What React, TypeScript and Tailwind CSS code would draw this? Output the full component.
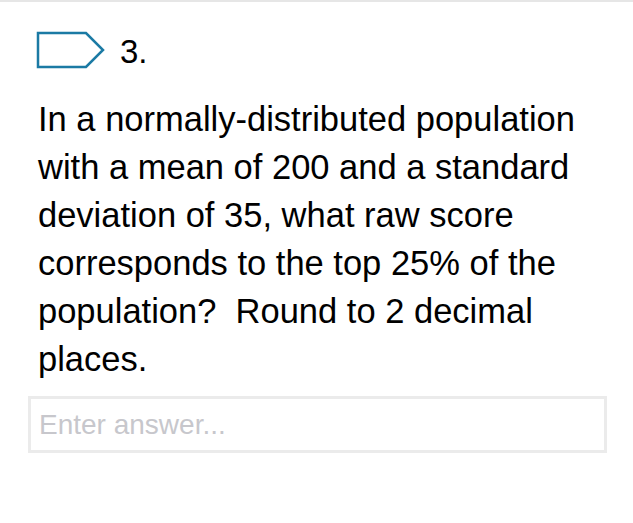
import React from "react";

function TagIcon() {
  return (
    <svg width="72" height="40" viewBox="0 0 72 40" className="shrink-0">
      <path
        d="M2 2 H50 L67 19 L50 36 H2 Z"
        fill="none"
        stroke="#1b7aa4"
        strokeWidth="2.5"
        strokeLinejoin="miter"
      />
    </svg>
  );
}

function App() {
  return (
    <div
      className="w-[633px] h-[523px] bg-white border-t-2 border-[#e6e6e6]"
      style={{ fontFamily: '"Liberation Sans", Arial, sans-serif' }}
    >
      <div className="flex items-center gap-[12px] pl-[36px] pt-[29px]">
        <TagIcon />
        <span className="text-[33px] leading-none text-black">3.</span>
      </div>
      <p className="pl-[38px] mt-[24px] text-[34.5px] leading-[48px] text-black whitespace-nowrap">
        In a normally-distributed population
        <br />
        with a mean of 200 and a standard
        <br />
        deviation of 35, what raw score
        <br />
        corresponds to the top 25% of the
        <br />
        population?&nbsp; Round to 2 decimal
        <br />
        places.
      </p>
      <div className="pl-[28px] pr-[26px] mt-[13px]">
        <input
          type="text"
          placeholder="Enter answer..."
          className="w-full h-[57px] border-[3px] border-[#ebebeb] px-[8px] text-[28px] text-black placeholder:text-[#c7c7cc] outline-none"
        />
      </div>
    </div>
  );
}

export default App;
